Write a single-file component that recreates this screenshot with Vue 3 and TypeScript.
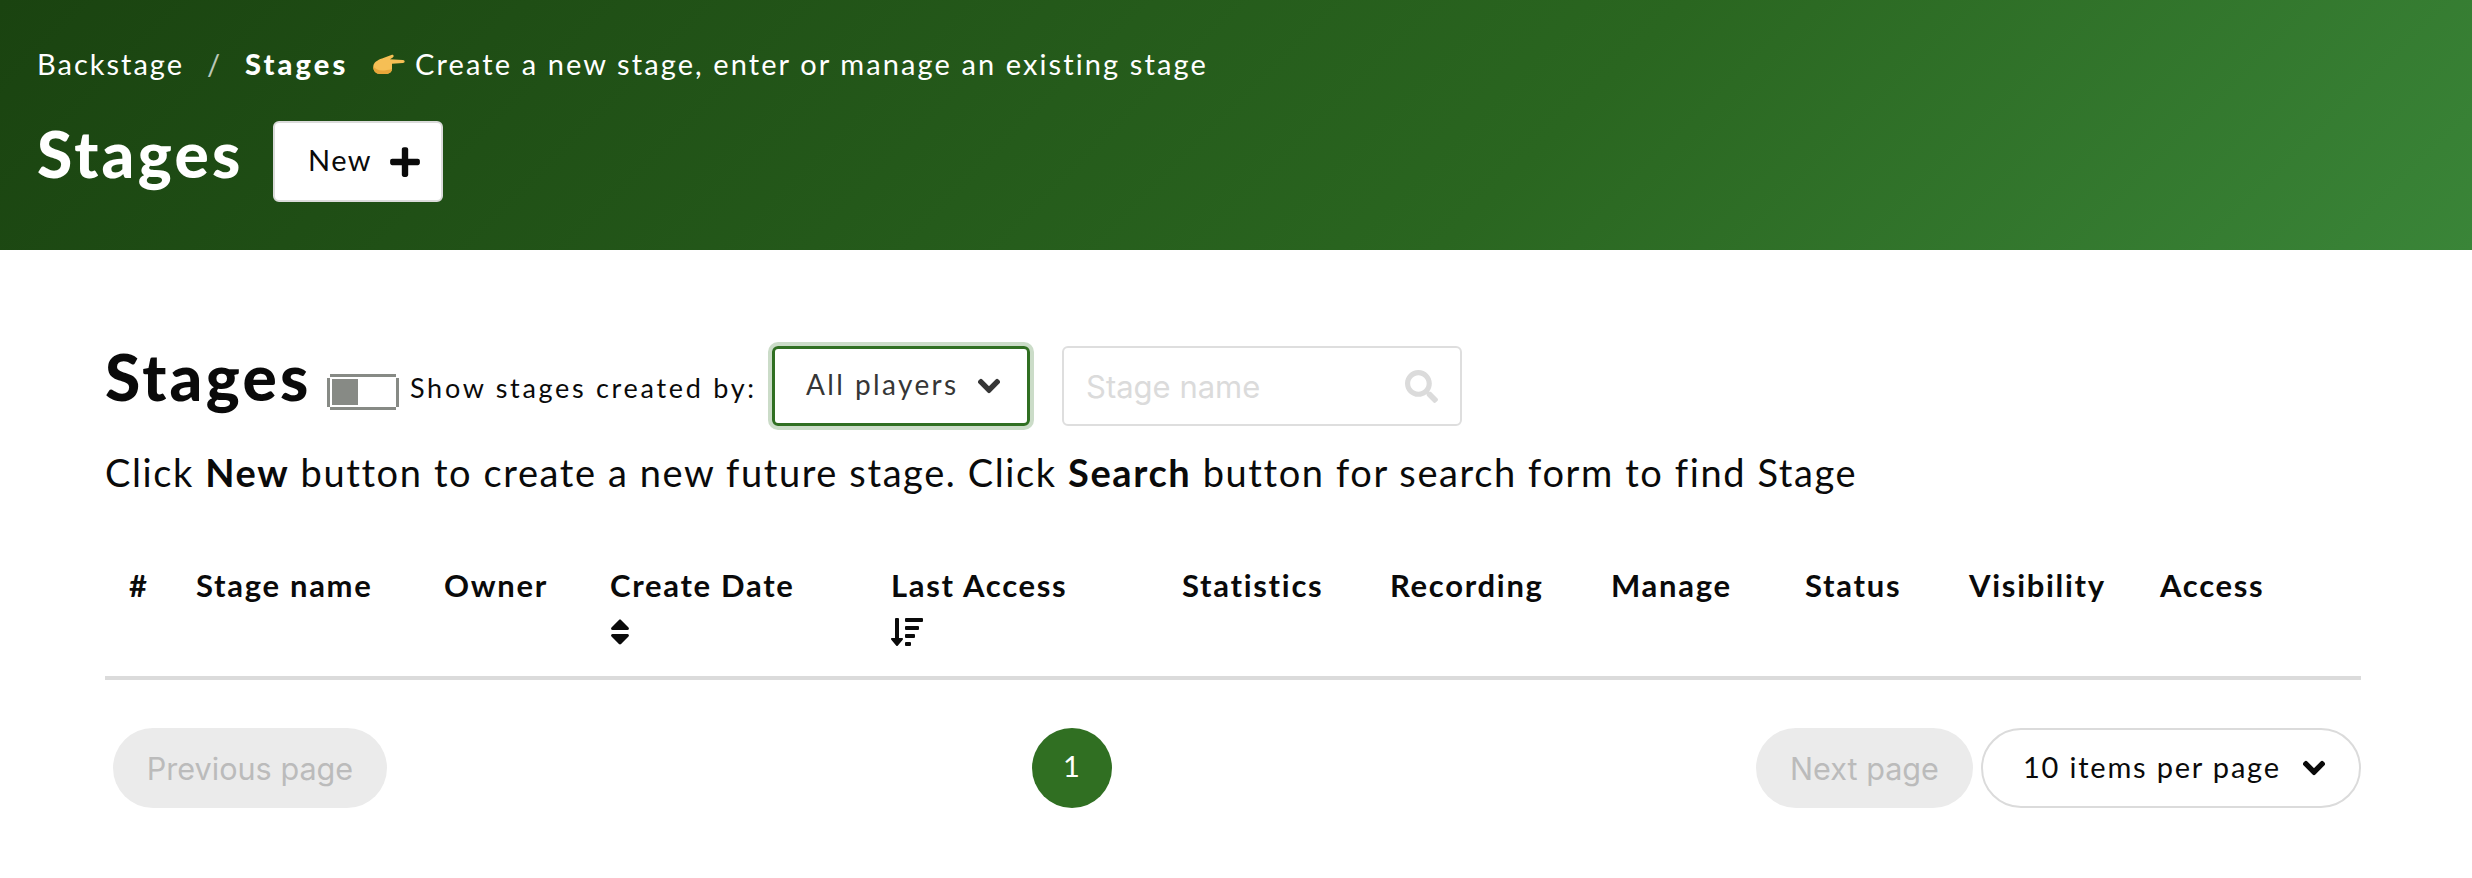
<script setup lang="ts">
const columns: { label: string; icon?: 'sort' | 'sortDown' }[] = [
  { label: '#' },
  { label: 'Stage name' },
  { label: 'Owner' },
  { label: 'Create Date', icon: 'sort' },
  { label: 'Last Access', icon: 'sortDown' },
  { label: 'Statistics' },
  { label: 'Recording' },
  { label: 'Manage' },
  { label: 'Status' },
  { label: 'Visibility' },
  { label: 'Access' },
]
const chevron =
  'M207.029 381.476L12.686 187.132c-9.373-9.373-9.373-24.569 0-33.941l22.667-22.667c9.357-9.357 24.522-9.375 33.901-.04L224 284.505l154.745-154.021c9.379-9.335 24.544-9.317 33.901.04l22.667 22.667c9.373 9.373 9.373 24.569 0 33.941L240.971 381.476c-9.373 9.372-24.569 9.372-33.942 0z'
</script>

<template>
  <div class="page">
    <header class="hero">
      <nav class="crumbs">
        <span class="crumb-link">Backstage</span>
        <span class="crumb-sep">/</span>
        <strong class="crumb-current">Stages</strong>
        <svg class="hand" viewBox="0 0 32 20" aria-hidden="true">
          <path d="M9 4.5 L19 .8 C20.6 .3 21.4 2.6 19.8 3.4 L17 5.2 L30 6 C32.2 6.2 32.2 8.8 30 9 L19 9.8 L19 15 C19 18 16 20 12 20 L7 20 C3 20 0 17 .3 12.5 C.5 8.5 4.5 6 9 4.5 Z" fill="#f6bf55" />
          <path d="M7 20 C3 20 0 17 .3 12.5 C3 16 8 18 19 15 C19 18 16 20 12 20 Z" fill="#e8a63a" />
        </svg>
        <span class="crumb-tip">Create a new stage, enter or manage an existing stage</span>
      </nav>
      <div class="hero-title">
        <h1 class="hero-heading">Stages</h1>
        <button class="new-btn" type="button">
          <span class="new-label">New</span>
          <svg class="plus" viewBox="0 0 448 512" aria-hidden="true">
            <path d="M416 208H272V64c0-17.67-14.33-32-32-32h-32c-17.67 0-32 14.33-32 32v144H32c-17.67 0-32 14.33-32 32v32c0 17.67 14.33 32 32 32h144v144c0 17.67 14.33 32 32 32h32c17.67 0 32-14.33 32-32V304h144c17.67 0 32-14.33 32-32v-32c0-17.67-14.33-32-32-32z" />
          </svg>
        </button>
      </div>
    </header>

    <main class="content">
      <div class="toolbar">
        <h2 class="section-title">Stages</h2>
        <span class="toggle"><span class="toggle-thumb"></span></span>
        <span class="toggle-label">Show stages created by:</span>
        <div class="select-box">
          <span class="select-text">All players</span>
          <svg class="chev" viewBox="0 0 448 512" aria-hidden="true"><path :d="chevron" /></svg>
        </div>
        <div class="search-box">
          <span class="placeholder">Stage name</span>
          <svg class="search-icon" viewBox="0 0 512 512" aria-hidden="true">
            <path d="M505 442.7L405.3 343c-4.5-4.5-10.6-7-17-7H372c27.6-35.3 44-79.7 44-128C416 93.1 322.9 0 208 0S0 93.1 0 208s93.1 208 208 208c48.3 0 92.7-16.4 128-44v16.3c0 6.4 2.5 12.5 7 17l99.7 99.7c9.4 9.4 24.6 9.4 33.9 0l28.3-28.3c9.4-9.4 9.4-24.6.1-34zM208 336c-70.7 0-128-57.2-128-128 0-70.7 57.2-128 128-128 70.7 0 128 57.2 128 128 0 70.7-57.2 128-128 128z" />
          </svg>
        </div>
      </div>

      <p class="desc">Click <strong>New</strong> button to create a new future stage. Click <strong>Search</strong> button for search form to find Stage</p>

      <div class="table-head">
        <div v-for="c in columns" :key="c.label" class="th">
          <span class="th-label">{{ c.label }}</span>
          <svg v-if="c.icon === 'sort'" class="th-icon sort" viewBox="0 0 320 512" aria-hidden="true">
            <path d="M41 288h238c21.4 0 32.1 25.9 17 41L177 448c-9.4 9.4-24.6 9.4-33.9 0L24 329c-15.1-15.1-4.4-41 17-41zm255-105L177 64c-9.4-9.4-24.6-9.4-33.9 0L24 183c-15.1 15.1-4.4 41 17 41h238c21.4 0 32.1-25.9 17-41z" />
          </svg>
          <svg v-else-if="c.icon === 'sortDown'" class="th-icon sort-down" viewBox="0 0 512 512" aria-hidden="true">
            <path d="M304 416h-64a16 16 0 0 0-16 16v32a16 16 0 0 0 16 16h64a16 16 0 0 0 16-16v-32a16 16 0 0 0-16-16zm-128-64h-48V48a16 16 0 0 0-16-16H80a16 16 0 0 0-16 16v304H16c-14.19 0-21.37 17.24-11.29 27.31l80 96a16 16 0 0 0 22.62 0l80-96C197.35 369.26 190.22 352 176 352zm256-192H240a16 16 0 0 0-16 16v32a16 16 0 0 0 16 16h192a16 16 0 0 0 16-16v-32a16 16 0 0 0-16-16zm-64 128H240a16 16 0 0 0-16 16v32a16 16 0 0 0 16 16h128a16 16 0 0 0 16-16v-32a16 16 0 0 0-16-16zM496 32H240a16 16 0 0 0-16 16v32a16 16 0 0 0 16 16h256a16 16 0 0 0 16-16V48a16 16 0 0 0-16-16z" />
          </svg>
        </div>
      </div>

      <div class="pagination">
        <button class="page-btn prev" type="button" disabled>Previous page</button>
        <div class="page-list"><span class="page-num">1</span></div>
        <button class="page-btn next" type="button" disabled>Next page</button>
        <div class="per-page">
          <span class="per-text">10 items per page</span>
          <svg class="chev dark" viewBox="0 0 448 512" aria-hidden="true"><path :d="chevron" /></svg>
        </div>
      </div>
    </main>
  </div>
</template>

<style>
html, body { margin: 0; background: #fff; }
</style>

<style scoped>
.page {
  width: 2472px;
  height: 878px;
  overflow: hidden;
  font-family: Lato, "Liberation Sans", sans-serif;
  color: #0a0a0a;
  background: #fff;
}
.hero {
  box-sizing: border-box;
  height: 250px;
  padding: 44px 0 0 37px;
  color: #fff;
  background: linear-gradient(135deg, #1a4310 0%, #2a6620 62%, #3a8538 100%);
}
.crumbs {
  display: flex;
  align-items: center;
  height: 40px;
  font-size: 29px;
  line-height: 40px;
}
.crumb-link { letter-spacing: 2px; width: 146px; white-space: nowrap; }
.crumb-sep { margin-left: 24px; opacity: .7; }
.crumb-current { margin-left: 25px; font-weight: 900; letter-spacing: 3.1px; width: 103px; white-space: nowrap; }
.hand { width: 32px; height: 20px; margin-left: 25px; }
.crumb-tip { margin-left: 10px; letter-spacing: 2.1px; white-space: nowrap; }
.hero-title {
  display: flex;
  align-items: center;
  margin-top: 37px;
  height: 81px;
}
.hero-heading {
  margin: 0 0 16px;
  width: 236px;
  font-size: 64px;
  line-height: 70px;
  font-weight: 900;
  letter-spacing: 3.3px;
  white-space: nowrap;
}
.new-btn {
  box-sizing: border-box;
  display: flex;
  align-items: center;
  width: 170px;
  height: 81px;
  padding: 0 0 4px 33px;
  background: #fff;
  border: 2px solid #dbdbdb;
  border-radius: 6px;
  font-family: inherit;
  font-size: 29px;
  color: #0a0a0a;
}
.new-label { letter-spacing: 1.5px; width: 66px; text-align: left; }
.plus { width: 30px; height: 34px; margin: 4px 0 0 16px; fill: #0a0a0a; }

.content { padding: 96px 111px 0 105px; }
.toolbar { display: flex; align-items: center; height: 80px; }
.section-title {
  margin: 0 0 18px;
  width: 222px;
  font-size: 64px;
  line-height: 70px;
  font-weight: 900;
  letter-spacing: 3.3px;
  white-space: nowrap;
}
.toggle {
  box-sizing: border-box;
  width: 72px;
  height: 36px;
  margin-top: 12px;
  padding: 5px;
  display: block;
  background:
    linear-gradient(#878a85, #878a85) center top / 66px 3px no-repeat,
    linear-gradient(#878a85, #878a85) center bottom / 66px 3px no-repeat,
    linear-gradient(#878a85, #878a85) left center / 3px 29px no-repeat,
    linear-gradient(#878a85, #878a85) right center / 3px 29px no-repeat,
    #fff;
}
.toggle-thumb { display: block; width: 26px; height: 26px; background: #878a85; }
.toggle-label {
  margin: 2px 0 0 11px;
  width: 362px;
  font-size: 27px;
  letter-spacing: 2.7px;
  white-space: nowrap;
}
.select-box {
  box-sizing: border-box;
  display: flex;
  align-items: center;
  width: 258px;
  height: 80px;
  padding: 0 0 4px 31px;
  border: 3px solid #306f22;
  border-radius: 6px;
  box-shadow: 0 0 0 4px #cbdcc8;
}
.select-text { width: 172px; color: #363636; font-size: 28px; letter-spacing: 2.4px; white-space: nowrap; }
.chev { width: 22px; height: 24px; margin-top: 4px; fill: #363636; stroke: #363636; stroke-width: 36; }
.chev.dark { fill: #0a0a0a; stroke: #0a0a0a; }
.search-box {
  box-sizing: border-box;
  display: flex;
  align-items: center;
  justify-content: space-between;
  width: 400px;
  height: 80px;
  margin-left: 32px;
  padding: 0 22px 0 22px;
  border: 2px solid #dedede;
  border-radius: 6px;
}
.placeholder { font-family: Inter, sans-serif; font-size: 31px; color: #dbdbdb; }
.search-icon { width: 33px; height: 33px; fill: #dbdbdb; }
.desc {
  margin: 22px 0 0;
  height: 50px;
  font-size: 38px;
  line-height: 48px;
  letter-spacing: 1.6px;
  white-space: nowrap;
}
.desc strong { font-weight: 700; }
.table-head {
  display: grid;
  grid-template-columns: 67px 248px 166px 281px 291px 208px 221px 194px 164px 191px 225px;
  height: 116px;
  margin-top: 62px;
  border-bottom: 4px solid #dbdbdb;
}
.th { box-sizing: border-box; padding-left: 24px; }
.th-label {
  display: block;
  height: 52px;
  font-size: 31px;
  line-height: 50px;
  font-weight: 700;
  letter-spacing: 1.7px;
  white-space: nowrap;
}
.th-icon { display: block; fill: #0a0a0a; }
.sort { width: 20px; height: 32px; margin-top: 4px; }
.sort-down { width: 32px; height: 36px; margin-top: 2px; }
.pagination {
  display: flex;
  align-items: center;
  height: 80px;
  margin-top: 48px;
  padding-left: 8px;
}
.page-btn {
  box-sizing: border-box;
  height: 80px;
  padding: 0;
  border: 0;
  border-radius: 40px;
  background: #ebebeb;
  color: #bbb;
  font-family: Inter, sans-serif;
  font-size: 30.6px;
}
.prev { width: 274px; }
.next { width: 217px; }
.page-list { flex: 1; display: flex; justify-content: center; }
.page-num {
  width: 80px;
  height: 80px;
  border-radius: 50%;
  background: #306f22;
  color: #fff;
  font-size: 29px;
  line-height: 75px;
  text-align: center;
}
.per-page {
  box-sizing: border-box;
  display: flex;
  align-items: center;
  width: 380px;
  height: 80px;
  margin-left: 8px;
  padding: 0 0 4px 40px;
  border: 2px solid #dbdbdb;
  border-radius: 40px;
}
.per-text { width: 280px; font-size: 29px; letter-spacing: 1.8px; white-space: nowrap; }
</style>
